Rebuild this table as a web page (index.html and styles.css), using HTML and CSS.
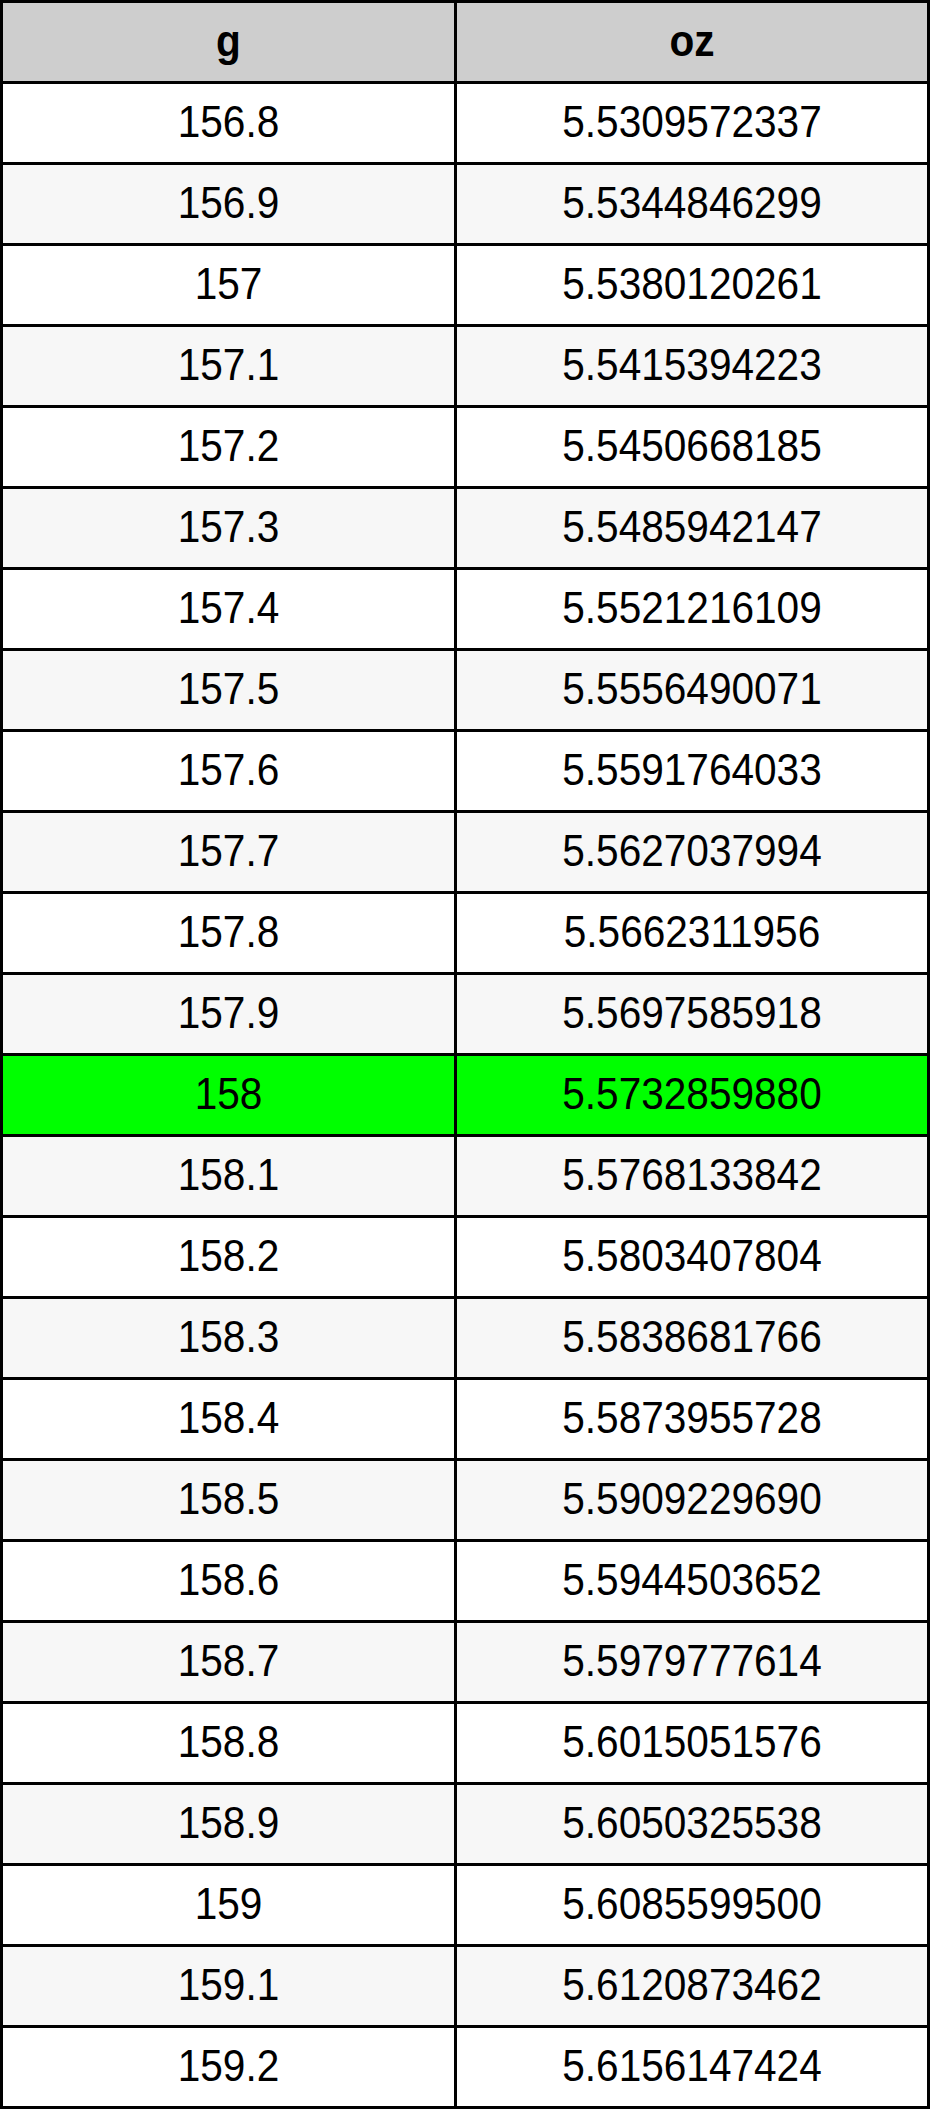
FILE: index.html
```html
<!DOCTYPE html>
<html>
<head>
<meta charset="utf-8">
<link rel="stylesheet" href="styles.css">
</head>
<body>
<table class="conv">
<thead>
<tr><th class="c1"><span class="v">g</span></th><th class="c2"><span class="v">oz</span></th></tr>
</thead>
<tbody>
<tr><td class="c1"><span class="v">156.8</span></td><td class="c2"><span class="v">5.5309572337</span></td></tr>
<tr class="alt"><td class="c1"><span class="v">156.9</span></td><td class="c2"><span class="v">5.5344846299</span></td></tr>
<tr><td class="c1"><span class="v">157</span></td><td class="c2"><span class="v">5.5380120261</span></td></tr>
<tr class="alt"><td class="c1"><span class="v">157.1</span></td><td class="c2"><span class="v">5.5415394223</span></td></tr>
<tr><td class="c1"><span class="v">157.2</span></td><td class="c2"><span class="v">5.5450668185</span></td></tr>
<tr class="alt"><td class="c1"><span class="v">157.3</span></td><td class="c2"><span class="v">5.5485942147</span></td></tr>
<tr><td class="c1"><span class="v">157.4</span></td><td class="c2"><span class="v">5.5521216109</span></td></tr>
<tr class="alt"><td class="c1"><span class="v">157.5</span></td><td class="c2"><span class="v">5.5556490071</span></td></tr>
<tr><td class="c1"><span class="v">157.6</span></td><td class="c2"><span class="v">5.5591764033</span></td></tr>
<tr class="alt"><td class="c1"><span class="v">157.7</span></td><td class="c2"><span class="v">5.5627037994</span></td></tr>
<tr><td class="c1"><span class="v">157.8</span></td><td class="c2"><span class="v">5.5662311956</span></td></tr>
<tr class="alt"><td class="c1"><span class="v">157.9</span></td><td class="c2"><span class="v">5.5697585918</span></td></tr>
<tr class="hl"><td class="c1"><span class="v">158</span></td><td class="c2"><span class="v">5.5732859880</span></td></tr>
<tr class="alt"><td class="c1"><span class="v">158.1</span></td><td class="c2"><span class="v">5.5768133842</span></td></tr>
<tr><td class="c1"><span class="v">158.2</span></td><td class="c2"><span class="v">5.5803407804</span></td></tr>
<tr class="alt"><td class="c1"><span class="v">158.3</span></td><td class="c2"><span class="v">5.5838681766</span></td></tr>
<tr><td class="c1"><span class="v">158.4</span></td><td class="c2"><span class="v">5.5873955728</span></td></tr>
<tr class="alt"><td class="c1"><span class="v">158.5</span></td><td class="c2"><span class="v">5.5909229690</span></td></tr>
<tr><td class="c1"><span class="v">158.6</span></td><td class="c2"><span class="v">5.5944503652</span></td></tr>
<tr class="alt"><td class="c1"><span class="v">158.7</span></td><td class="c2"><span class="v">5.5979777614</span></td></tr>
<tr><td class="c1"><span class="v">158.8</span></td><td class="c2"><span class="v">5.6015051576</span></td></tr>
<tr class="alt"><td class="c1"><span class="v">158.9</span></td><td class="c2"><span class="v">5.6050325538</span></td></tr>
<tr><td class="c1"><span class="v">159</span></td><td class="c2"><span class="v">5.6085599500</span></td></tr>
<tr class="alt"><td class="c1"><span class="v">159.1</span></td><td class="c2"><span class="v">5.6120873462</span></td></tr>
<tr><td class="c1"><span class="v">159.2</span></td><td class="c2"><span class="v">5.6156147424</span></td></tr>
</tbody>
</table>
</body>
</html>
```
FILE: styles.css
```css
html, body {
  margin: 0;
  padding: 0;
  background: #ffffff;
}

.conv {
  border-collapse: separate;
  border-spacing: 0;
  table-layout: fixed;
  width: 930px;
  border-top: 3px solid #000;
  border-left: 3px solid #000;
  border-right: 3px solid #000;
  font-family: "Liberation Sans", Arial, sans-serif;
  font-size: 40.6px;
  color: #000;
}

.conv th,
.conv td {
  height: 76px;
  padding: 0 0 2px 0;
  text-align: center;
  vertical-align: middle;
  border-bottom: 3px solid #000;
  box-sizing: content-box;
  line-height: 1;
}

.conv th {
  background: #cecece;
  font-weight: bold;
}

.conv .c1 {
  width: 451px;
  border-right: 3px solid #000;
}

.conv .c2 {
  width: 470px;
}

.conv .v {
  display: inline-block;
  transform: scaleY(1.09);
}

.conv td {
  background: #ffffff;
}

.conv tr.alt td {
  background: #f7f7f7;
}

.conv tr.hl td {
  background: #00ff00;
}
```
